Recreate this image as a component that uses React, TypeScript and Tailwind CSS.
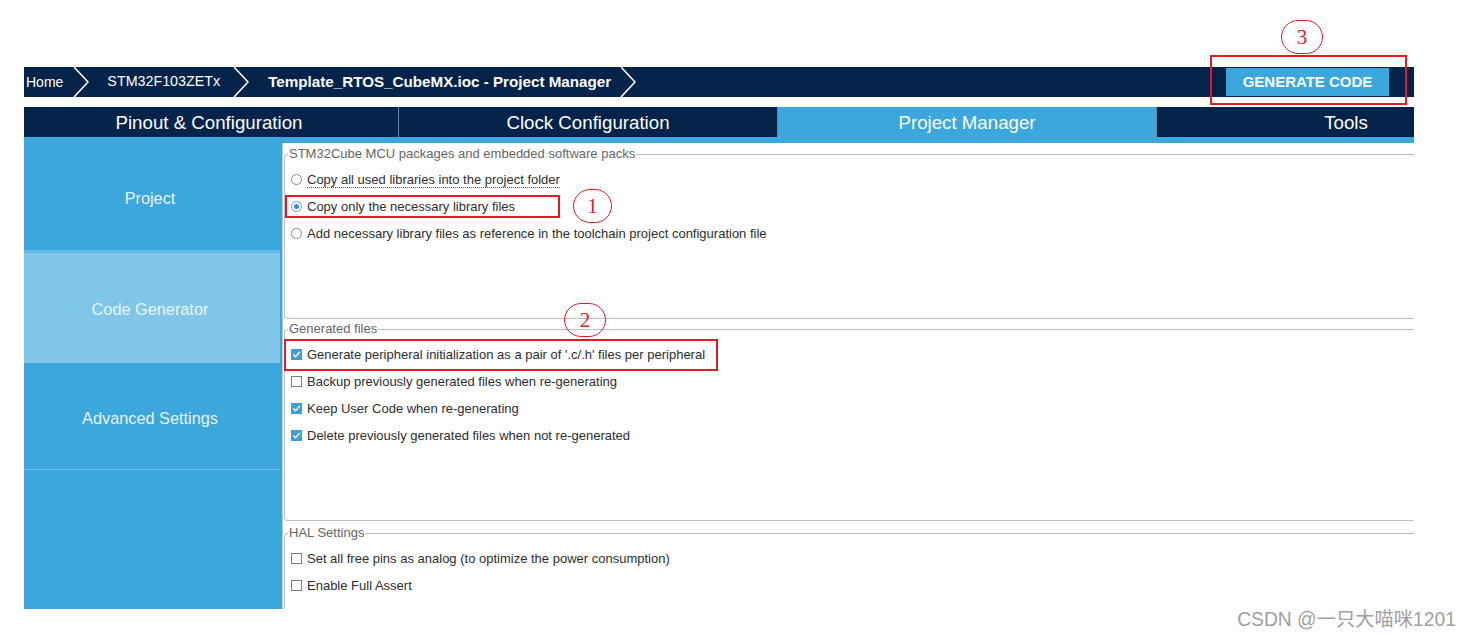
import React from 'react';

const NAVY = 'bg-[#03234b]';

function Chevron() {
    return (
        <svg width="16" height="30" viewBox="0 0 16 30" className="shrink-0">
            <polyline points="1,0 15,15 1,30" fill="none" stroke="#ffffff" strokeWidth="1.6" />
        </svg>
    );
}

function Radio({ checked, label, focused }: { checked?: boolean; label: string; focused?: boolean }) {
    return (
        <div className="flex items-center h-[27px] pl-[6px] gap-[5px]">
            <span
                className={`w-[11px] h-[11px] rounded-full border flex items-center justify-center bg-white shrink-0 ${
                    checked ? 'border-[#5aa8d8]' : 'border-[#8a8a8a]'
                }`}
            >
                {checked && <span className="w-[5px] h-[5px] rounded-full bg-[#2f8fd0]" />}
            </span>
            <span className={`leading-[15px] ${focused ? 'border-b border-dotted border-[#555]' : ''}`}>{label}</span>
        </div>
    );
}

function Check({ checked, label }: { checked?: boolean; label: string }) {
    return (
        <div className="flex items-center h-[27px] pl-[6px] gap-[5px]">
            {checked ? (
                <span className="w-[11px] h-[11px] bg-[#3a9fdc] flex items-center justify-center shrink-0">
                    <svg width="9" height="9" viewBox="0 0 9 9">
                        <polyline points="1.3,4.6 3.5,6.8 7.8,2" fill="none" stroke="#ffffff" strokeWidth="1.4" />
                    </svg>
                </span>
            ) : (
                <span className="w-[11px] h-[11px] bg-white border border-[#7a7a7a] shrink-0" />
            )}
            <span className="leading-[15px]">{label}</span>
        </div>
    );
}

function Group({ title, className, children }: { title: string; className: string; children: React.ReactNode }) {
    return (
        <fieldset className={`border border-r-0 border-[#b8bfc6] rounded-l-[4px] ${className}`}>
            <legend className="ml-[3px] px-[1px] text-[13px] leading-[14px] text-[#666]">{title}</legend>
            <div className="pt-[5px]">{children}</div>
        </fieldset>
    );
}

function Mark({ n, className }: { n: string; className: string }) {
    return (
        <div
            className={`absolute border-[1.5px] border-[#e31b23] rounded-full flex items-center justify-center text-[#e31b23] text-[21px] leading-none ${className}`}
            style={{ fontFamily: '"Liberation Serif", serif' }}
        >
            {n}
        </div>
    );
}

export default function App() {
    return (
        <div className="relative w-full h-[639px] bg-white overflow-hidden" style={{ fontFamily: '"Liberation Sans", Arial, sans-serif' }}>
            <div className="pt-[67px] pl-[24px]">
                <div className="w-[1390px]">
                    {/* Breadcrumb */}
                    <div className={`${NAVY} h-[30px] flex items-center text-white text-[14px]`}>
                        <span className="pl-[2px]">Home</span>
                        <span className="ml-[10px]"><Chevron /></span>
                        <span className="ml-[18px] text-[14.3px]">STM32F103ZETx</span>
                        <span className="ml-[13px]"><Chevron /></span>
                        <span className="ml-[19px] font-bold text-[15.2px]">Template_RTOS_CubeMX.ioc - Project Manager</span>
                        <span className="ml-[9px]"><Chevron /></span>
                        <button className="ml-auto mr-[25px] w-[163px] h-[28px] bg-[#3ca7dc] text-white font-bold text-[15px]">
                            GENERATE CODE
                        </button>
                    </div>

                    {/* Tabs */}
                    <div className={`${NAVY} mt-[10px] h-[30px] flex text-white text-[18.7px] overflow-hidden`}>
                        <div className="w-[374px] shrink-0 flex items-center justify-center pt-[2px] pr-[4px]">Pinout &amp; Configuration</div>
                        <div className="w-[379px] shrink-0 flex items-center justify-center pt-[2px] border-l border-[#6f86a3]">Clock Configuration</div>
                        <div className="w-[379px] shrink-0 flex items-center justify-center pt-[2px] border-l border-[#6f86a3] bg-[#3ca7dc]">Project Manager</div>
                        <div className="w-[379px] shrink-0 flex items-center justify-center pt-[2px] border-l border-[#6f86a3]">Tools</div>
                    </div>
                    <div className="h-[6px] bg-[#3ca7dc]" />

                    {/* Body */}
                    <div className="flex h-[466px]">
                        <div className="w-[256px] shrink-0 flex flex-col bg-[#3ca7dc] text-[16.3px] text-[#eaf5fb]">
                            <div className="h-[107px] flex items-center justify-center pt-[3px] pr-[4px]">Project</div>
                            <div className="h-[3px] bg-[#5fbbe5]" />
                            <div className="h-[110px] flex items-center justify-center pt-[2px] pr-[4px] bg-[#7fc6e9]">Code Generator</div>
                            <div className="h-[107px] flex items-center justify-center pt-[4px] pr-[4px] border-b border-[#6bc0e7]">Advanced Settings</div>
                            <div className="flex-1" />
                        </div>
                        <div className="w-[2px] bg-[#3ca7dc]" />
                        <div className="flex-1 border-l border-[#c5cad0] pl-[1px] pt-[4px] overflow-hidden text-[13px] text-[#2e2e2e]">
                            <Group title="STM32Cube MCU packages and embedded software packs" className="h-[172px]">
                                <Radio label="Copy all used libraries into the project folder" focused />
                                <Radio label="Copy only the necessary library files" checked />
                                <Radio label="Add necessary library files as reference in the toolchain project configuration file" />
                            </Group>
                            <Group title="Generated files" className="h-[199px] mt-[3px]">
                                <Check checked label="Generate peripheral initialization as a pair of '.c/.h' files per peripheral" />
                                <Check label="Backup previously generated files when re-generating" />
                                <Check checked label="Keep User Code when re-generating" />
                                <Check checked label="Delete previously generated files when not re-generated" />
                            </Group>
                            <Group title="HAL Settings" className="h-[120px] mt-[5px]">
                                <Check label="Set all free pins as analog (to optimize the power consumption)" />
                                <Check label="Enable Full Assert" />
                            </Group>
                        </div>
                    </div>
                </div>
            </div>

            {/* Watermark */}
            <div
                className="flex justify-end pr-[16px] text-[19.3px] leading-[22px] text-[#a0a0a0]"
                style={{ fontFamily: '"Liberation Sans", "Noto Sans CJK SC", sans-serif' }}
            >
                CSDN @一只大喵咪1201
            </div>

            {/* Annotations */}
            <div className="absolute left-[1210px] top-[55px] w-[197px] h-[50px] border-[2px] border-[#e31b23]" />
            <div className="absolute left-[285px] top-[195px] w-[275px] h-[23px] border-[2px] border-[#e31b23]" />
            <div className="absolute left-[284px] top-[339px] w-[434px] h-[32px] border-[2px] border-[#e31b23]" />
            <Mark n="3" className="left-[1281px] top-[20px] w-[42px] h-[34px]" />
            <Mark n="1" className="left-[573px] top-[189px] w-[39px] h-[34px]" />
            <Mark n="2" className="left-[564px] top-[303px] w-[42px] h-[34px]" />
        </div>
    );
}
